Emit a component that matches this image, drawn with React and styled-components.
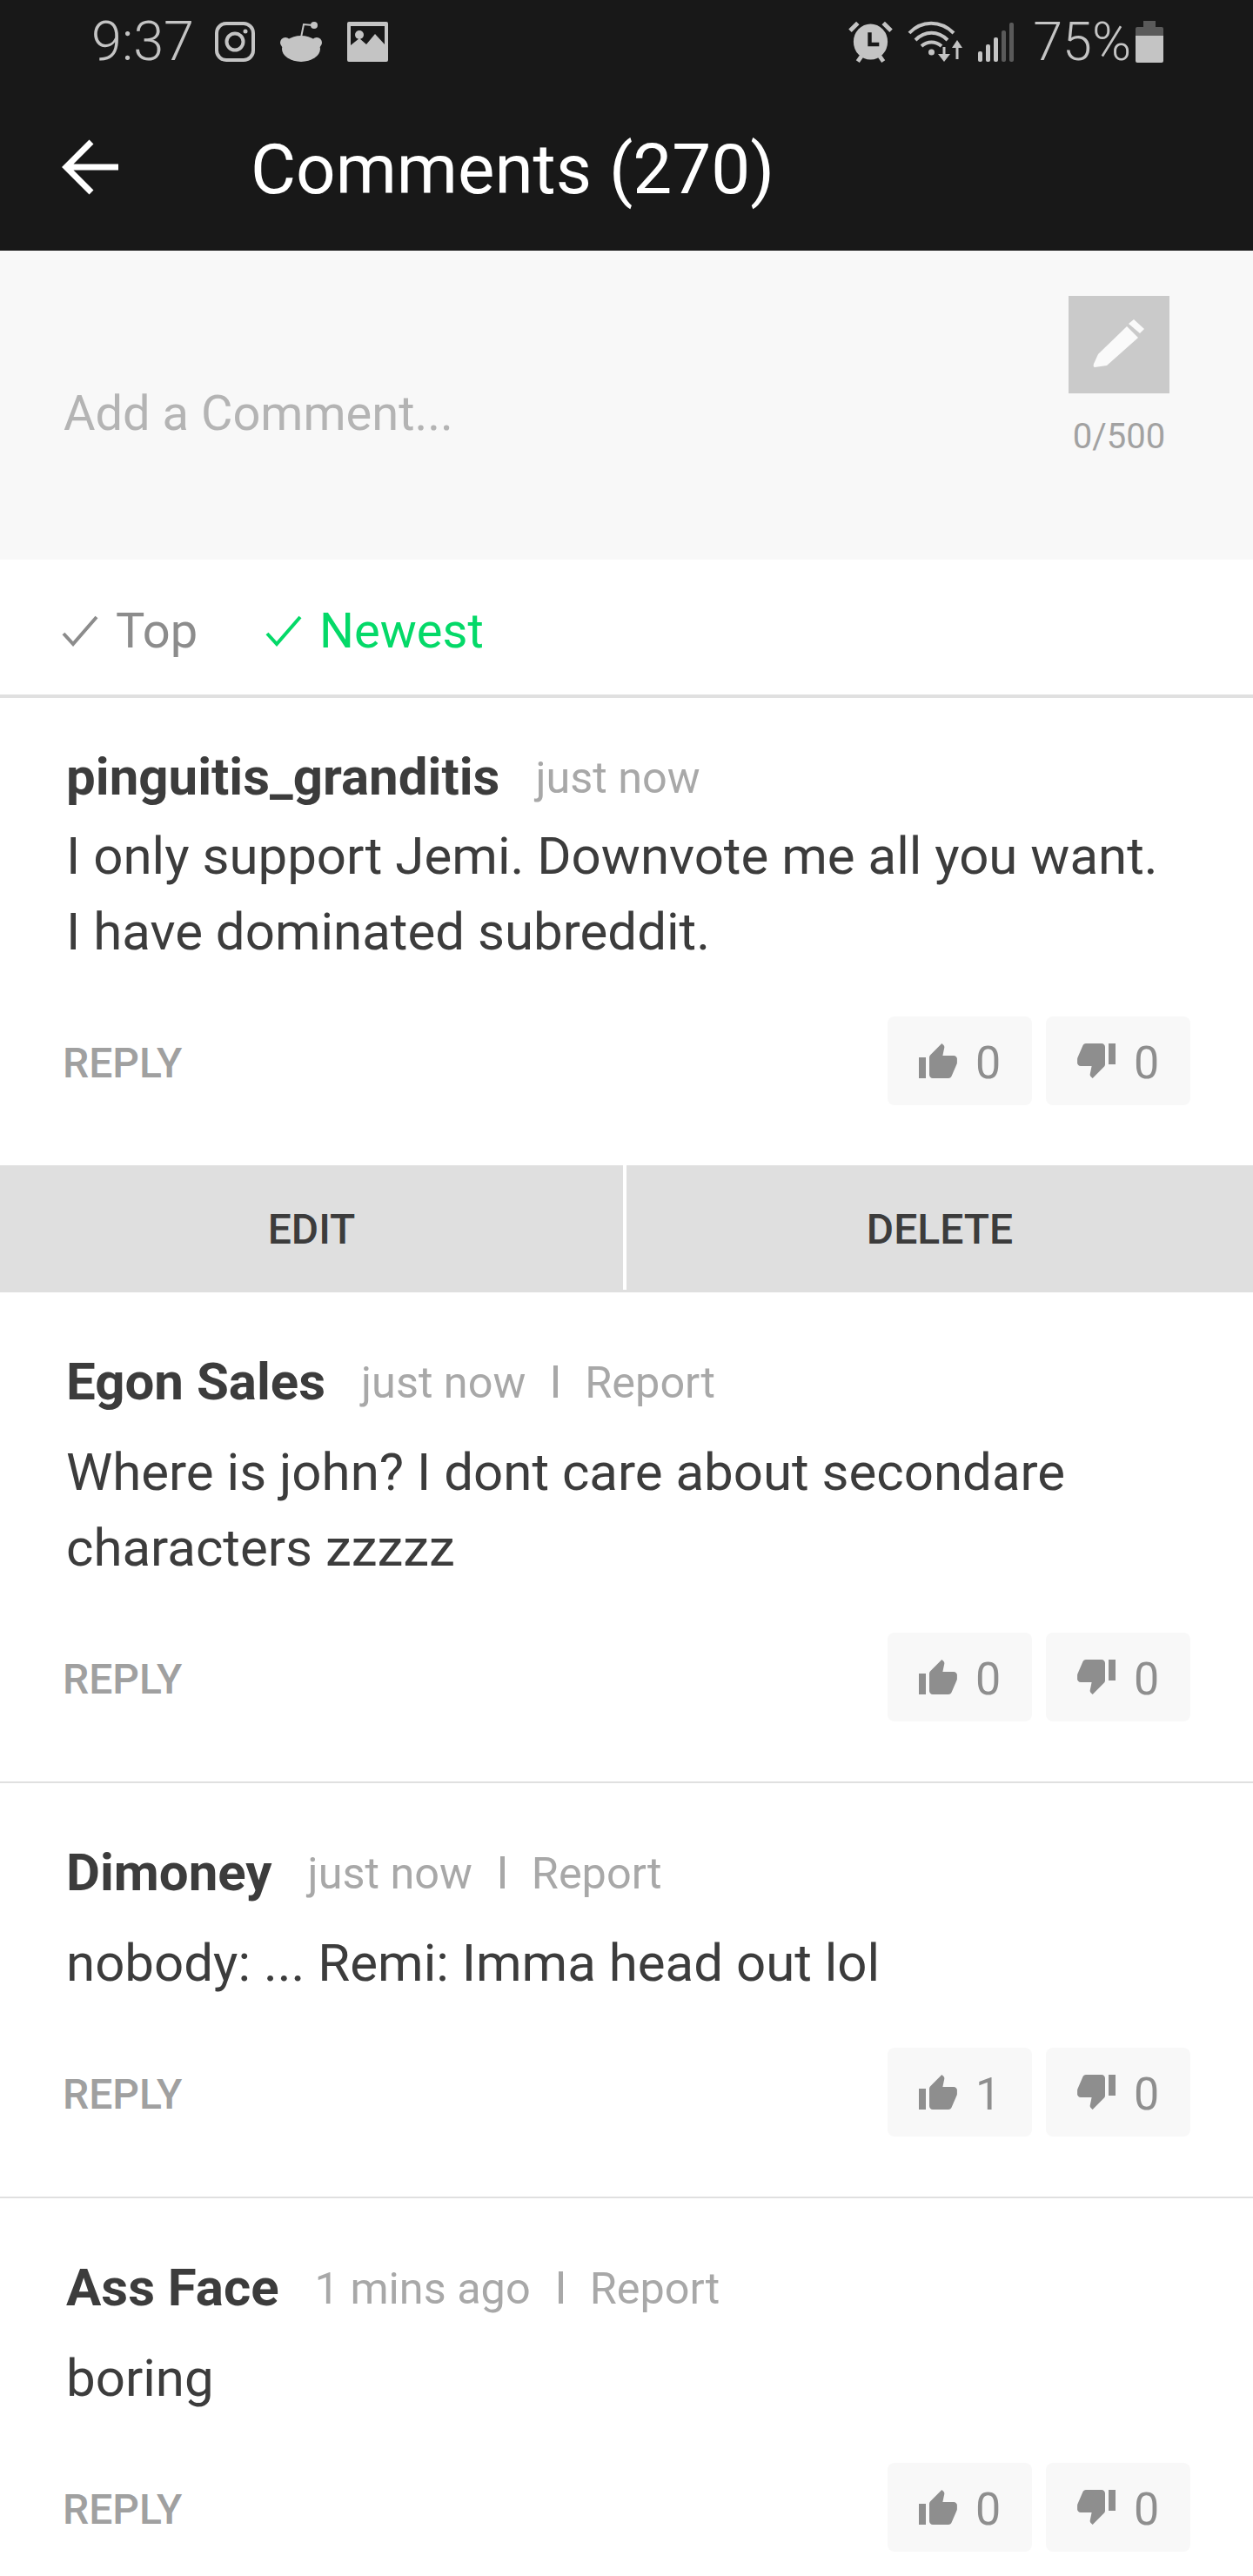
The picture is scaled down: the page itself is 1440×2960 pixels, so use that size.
import React from "react";
import styled, { createGlobalStyle } from "styled-components";

const GlobalStyle = createGlobalStyle`
    html, body {
        margin: 0;
        padding: 0;
        background: #fff;
        font-family: Roboto, "Liberation Sans", sans-serif;
    }
`;

const THUMB = "M1 21h4V9H1v12zm22-11c0-1.1-.9-2-2-2h-6.31l.95-4.57.03-.32c0-.41-.17-.79-.44-1.06L14.17 1 7.59 7.59C7.22 7.95 7 8.45 7 9v10c0 1.1.9 2 2 2h9c.83 0 1.54-.5 1.8-1.22l3.02-7.05c.08-.23.13-.47.13-.73V10z";

const comments = [
    { name: "pinguitis_granditis", time: "just now", own: true, lines: ["I only support Jemi. Downvote me all you want.", "I have dominated subreddit."], up: 0, down: 0 },
    { name: "Egon Sales", time: "just now", lines: ["Where is john? I dont care about secondare", "characters zzzzz"], up: 0, down: 0 },
    { name: "Dimoney", time: "just now", lines: ["nobody: ... Remi: Imma head out lol"], up: 1, down: 0 },
    { name: "Ass Face", time: "1 mins ago", lines: ["boring"], up: 0, down: 0 },
];

const Instagram = () => (
    <StatusSvg width="46" height="46" viewBox="0 0 46 46" fill="none" stroke="#c4c4c4" strokeWidth="4">
        <rect x="2" y="2" width="42" height="42" rx="11" />
        <circle cx="23" cy="23" r="9.5" />
        <circle cx="35" cy="11" r="2.5" fill="#c4c4c4" stroke="none" />
    </StatusSvg>
);

const Reddit = () => (
    <StatusSvg width="50" height="46" viewBox="0 0 50 46" fill="#c4c4c4">
        <circle cx="7" cy="24" r="6" />
        <circle cx="43" cy="24" r="6" />
        <ellipse cx="25" cy="31" rx="22" ry="15" />
        <circle cx="40" cy="4" r="4" />
        <path d="M25 18 L28 3 L38 4" fill="none" stroke="#c4c4c4" strokeWidth="2" />
    </StatusSvg>
);

const Picture = () => (
    <StatusSvg width="47" height="46" viewBox="0 0 47 46" fill="#c4c4c4">
        <path fillRule="evenodd" d="M2 0h43a2 2 0 0 1 2 2v42a2 2 0 0 1-2 2H2a2 2 0 0 1-2-2V2a2 2 0 0 1 2-2zM4 5v22l10-8 8 7 10-12 11 12V5z" />
        <circle cx="14" cy="15" r="5" />
    </StatusSvg>
);

const Alarm = () => (
    <StatusSvg width="51" height="48" viewBox="0 0 52 48">
        <ellipse cx="26" cy="24" rx="20" ry="21" fill="#c4c4c4" />
        <path d="M2 11 L11 2 M50 11 L41 2 M11 47 L16 40 M41 47 L36 40" stroke="#c4c4c4" strokeWidth="5" />
        <path d="M25 13 V27 H36" fill="none" stroke="#181818" strokeWidth="4.5" />
    </StatusSvg>
);

const Wifi = () => (
    <StatusSvg width="64" height="48" viewBox="0 0 64 48" fill="none" stroke="#c4c4c4" strokeWidth="4">
        <path d="M2 14 C16 -1 38 -1 53 14" />
        <path d="M9 22 C20 11 35 11 46 22" />
        <path d="M16 29 C23 23 32 23 39 29" />
        <circle cx="27.5" cy="36" r="3.5" fill="#c4c4c4" stroke="none" />
        <path d="M42 30 V44" strokeWidth="3" />
        <path d="M35 38 L42 47 L49 38 Z" fill="#c4c4c4" stroke="none" />
        <path d="M57 30 V44" strokeWidth="3" />
        <path d="M51 31 L57 22 L63 31 Z" fill="#c4c4c4" stroke="none" />
    </StatusSvg>
);

const Signal = () => (
    <StatusSvg width="41" height="45" viewBox="0 0 41 45">
        <rect x="0" y="33" width="5" height="12" rx="2" fill="#c4c4c4" />
        <rect x="9" y="25" width="5" height="20" rx="2" fill="#c4c4c4" />
        <rect x="18" y="17" width="5" height="28" rx="2" fill="#c4c4c4" />
        <rect x="27" y="9" width="5" height="36" rx="2" fill="#5a5a5a" />
        <rect x="36" y="0" width="5" height="45" rx="2" fill="#5a5a5a" />
    </StatusSvg>
);

const Battery = () => (
    <StatusSvg width="32" height="48" viewBox="0 0 32 48">
        <path d="M9 0h14v7h7a2 2 0 0 1 2 2v8H0V9a2 2 0 0 1 2-2h7z" fill="#5a5a5a" />
        <path d="M0 17h32v29a2 2 0 0 1-2 2H2a2 2 0 0 1-2-2z" fill="#c4c4c4" />
    </StatusSvg>
);

const Thumb = ({ down }) => (
    <VoteIcon viewBox="1 1 22 20" $down={down}>
        <path d={THUMB} fill="#8e8e8e" />
    </VoteIcon>
);

const Check = ({ color }) => (
    <svg width="42" height="36" viewBox="0 0 42 36" fill="none" stroke={color} strokeWidth="4">
        <path d="M2 21 L13 33 L40 2" />
    </svg>
);

const Comment = ({ data, last }) => (
    <CommentBox $own={data.own} $last={last}>
        <NameRow>
            <Name>{data.name}</Name>
            <Meta>{data.time}</Meta>
            {!data.own && <Pipe />}
            {!data.own && <Meta>Report</Meta>}
        </NameRow>
        <Body $own={data.own}>
            {data.lines.map((line) => <div key={line}>{line}</div>)}
        </Body>
        <Actions>
            <Reply>REPLY</Reply>
            <Votes>
                <VoteButton><Thumb /><VoteCount>{data.up}</VoteCount></VoteButton>
                <VoteButton><Thumb down /><VoteCount>{data.down}</VoteCount></VoteButton>
            </Votes>
        </Actions>
    </CommentBox>
);

const App = () => (
    <Page>
        <GlobalStyle />
        <Top>
            <StatusBar>
                <LeftStatus>
                    <Clock>9:37</Clock>
                    <Instagram />
                    <Reddit />
                    <Picture />
                </LeftStatus>
                <RightStatus>
                    <Alarm />
                    <Wifi />
                    <Signal />
                    <Percent>75%</Percent>
                    <Battery />
                </RightStatus>
            </StatusBar>
            <Header>
                <svg width="66" height="66" viewBox="0 0 66 66" fill="none" stroke="#fff" strokeWidth="7">
                    <path d="M34 4 L5 33 L34 62 M5 33 H65" />
                </svg>
                <Title>Comments (270)</Title>
            </Header>
        </Top>
        <InputPanel>
            <Placeholder>Add a Comment...</Placeholder>
            <Submit>
                <PencilBox>
                    <svg width="116" height="112" viewBox="0 0 116 112" fill="#fafafa">
                        <path d="M30 82 Q28 82 29 78 L34 67 L67 35 L80 48 L44 80 Z" strokeLinejoin="round" />
                        <path d="M75 27 L87 38 L82 43 L69 32 Z" />
                    </svg>
                </PencilBox>
                <Counter>0/500</Counter>
            </Submit>
        </InputPanel>
        <Tabs>
            <Tab><Check color="#8c8c8c" /><span>Top</span></Tab>
            <Tab $active><Check color="#04d968" /><span>Newest</span></Tab>
        </Tabs>
        <Comment data={comments[0]} />
        <EditBar>
            <EditRow>
                <EditButton $first>EDIT</EditButton>
                <EditButton>DELETE</EditButton>
            </EditRow>
        </EditBar>
        {comments.slice(1).map((c, i) => <Comment key={c.name} data={c} last={i === 2} />)}
    </Page>
);

const Page = styled.div`
    width: 1440px;
    height: 2960px;
    overflow: hidden;
    background: #fff;
`;
const Top = styled.div`
    height: 288px;
    background: #181818;
`;
const StatusBar = styled.div`
    height: 96px;
    box-sizing: border-box;
    padding: 24px 103px 0 105px;
    display: flex;
    justify-content: space-between;
    align-items: flex-start;
`;
const LeftStatus = styled.div`
    display: flex;
    align-items: center;
    gap: 28px;
    height: 48px;
`;
const RightStatus = styled.div`
    display: flex;
    align-items: center;
    gap: 17px;
    height: 48px;
`;
const StatusSvg = styled.svg`
    display: block;
`;
const StatusText = styled.span`
    font-weight: 300;
    line-height: 48px;
    color: #c4c4c4;
`;
const Clock = styled(StatusText)`
    margin-right: -4px;
    font-size: 63px;
`;
const Percent = styled(StatusText)`
    margin: 0 -12px 0 5px;
    font-size: 61px;
`;
const Header = styled.div`
    height: 192px;
    padding-left: 71px;
    display: flex;
    align-items: center;
`;
const Title = styled.div`
    margin: 6px 0 0 151px;
    font-size: 80px;
    color: #fff;
`;
const InputPanel = styled.div`
    height: 355px;
    box-sizing: border-box;
    padding: 52px 96px 0 73px;
    background: #f8f8f8;
    display: flex;
    justify-content: space-between;
    align-items: flex-start;
`;
const Placeholder = styled.div`
    margin-top: 97px;
    font-size: 56px;
    line-height: 76px;
    color: #b4b4b4;
`;
const Submit = styled.div`
    width: 116px;
    display: flex;
    flex-direction: column;
    align-items: center;
`;
const PencilBox = styled.div`
    width: 116px;
    height: 112px;
    background: #cacaca;
    display: flex;
`;
const Counter = styled.div`
    margin-top: 26px;
    font-size: 40px;
    white-space: nowrap;
    color: #a2a2a2;
`;
const Tabs = styled.div`
    height: 159px;
    box-sizing: border-box;
    padding: 8px 71px 0;
    border-bottom: 4px solid #e0e0e0;
    display: flex;
    align-items: center;
    gap: 78px;
`;
const Tab = styled.div`
    display: flex;
    align-items: center;
    gap: 20px;
    font-size: 56px;
    color: ${(p) => (p.$active ? "#04d968" : "#8c8c8c")};
`;
const CommentBox = styled.div`
    padding: ${(p) => (p.$own ? "60px" : "72px")} 72px 69px 72px;
    border-bottom: ${(p) => (p.$own || p.$last ? "0" : "2px solid #e0e0e0")};
`;
const NameRow = styled.div`
    height: 60px;
    display: flex;
    align-items: center;
`;
const Name = styled.span`
    margin-left: 4px;
    margin-right: 41px;
    font-size: 60px;
    font-weight: 700;
    color: #3c3c3c;
`;
const Meta = styled.span`
    padding-top: 2px;
    font-size: 50.4px;
    color: #a8a8a8;
`;
const Pipe = styled.span`
    width: 5px;
    height: 37px;
    margin: 0 31px 0 32px;
    background: #a8a8a8;
`;
const Body = styled.div`
    margin: ${(p) => (p.$own ? "18px" : "31px")} 0 54px 4px;
    font-size: 60px;
    line-height: 87px;
    color: #3c3c3c;
`;
const Actions = styled.div`
    display: flex;
    justify-content: space-between;
    align-items: center;
`;
const Reply = styled.div`
    padding-top: 4px;
    font-size: 48px;
    font-weight: 500;
    color: #a0a0a0;
`;
const Votes = styled.div`
    display: flex;
    gap: 16px;
`;
const VoteButton = styled.div`
    width: 166px;
    height: 102px;
    box-sizing: border-box;
    padding-left: 36px;
    border-radius: 8px;
    background: #f8f8f8;
    display: flex;
    align-items: center;
    gap: 21px;
    font-size: 52px;
    color: #8e8e8e;
`;
const VoteCount = styled.span`
    padding-top: 4px;
`;
const VoteIcon = styled.svg`
    width: 44px;
    height: 40px;
    transform: ${(p) => (p.$down ? "rotate(180deg)" : "none")};
`;
const EditBar = styled.div`
    height: 146px;
    background: #dfdfdf;
`;
const EditRow = styled.div`
    height: 143px;
    display: grid;
    grid-template-columns: 1fr 1fr;
`;
const EditButton = styled.div`
    padding-top: 3px;
    display: flex;
    align-items: center;
    justify-content: center;
    border-right: ${(p) => (p.$first ? "4px solid #fff" : "0")};
    font-size: 48px;
    font-weight: 500;
    color: #3c3c3c;
`;

export default App;
